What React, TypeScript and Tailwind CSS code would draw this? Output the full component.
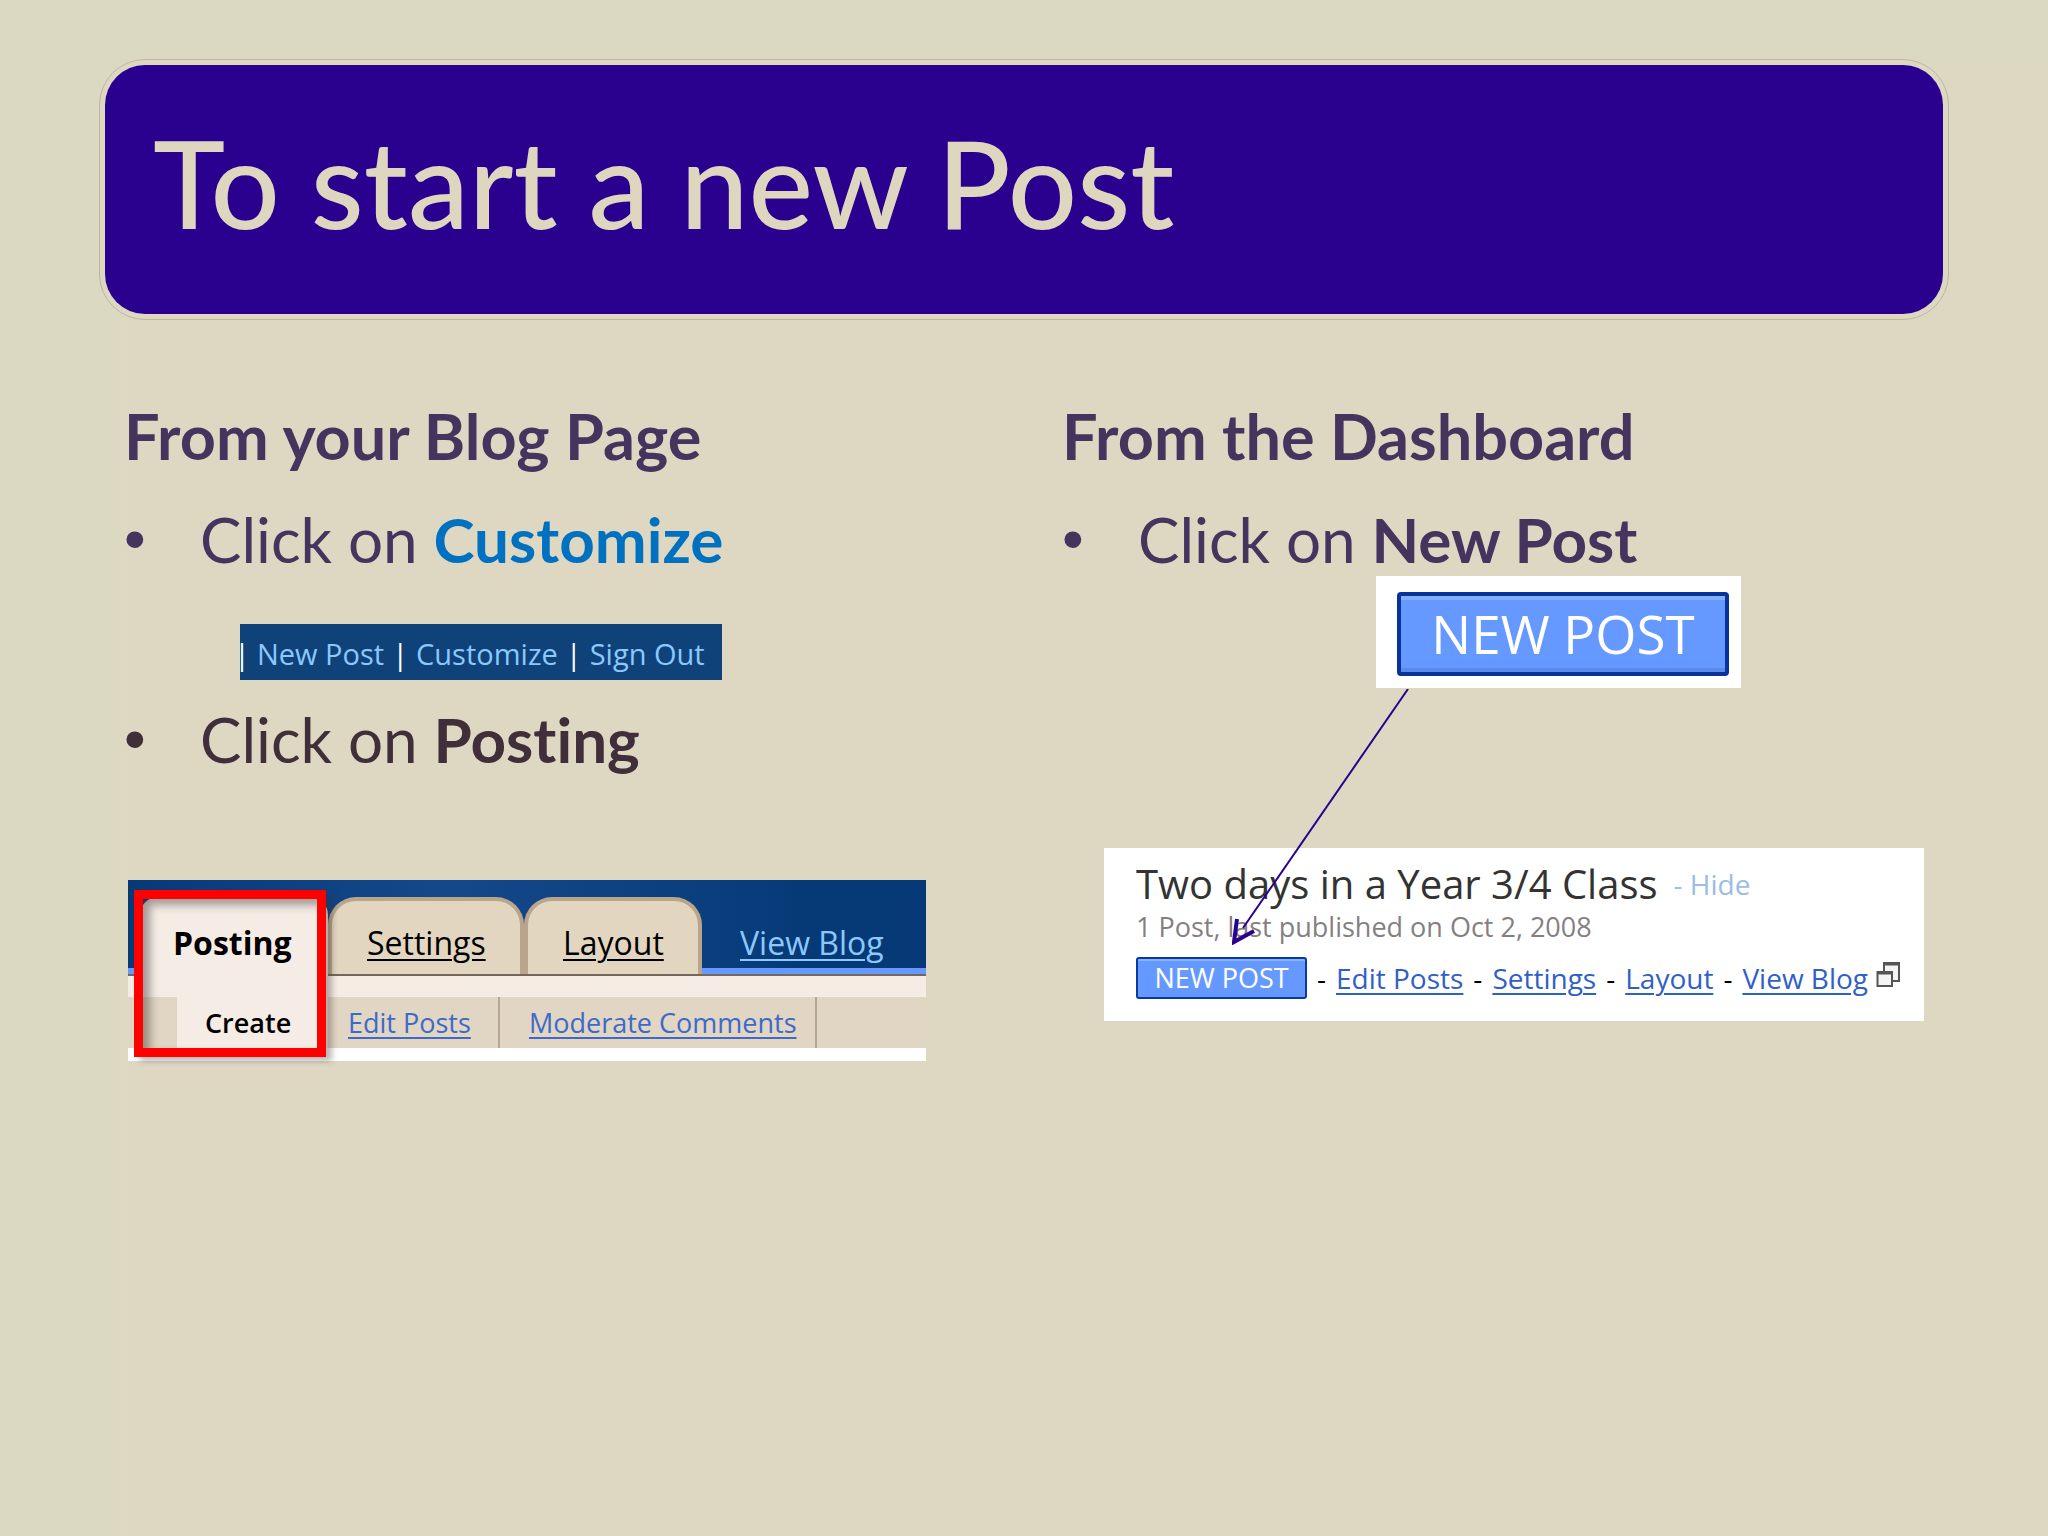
import type { ReactNode } from 'react'

interface BulletProps {
  children: ReactNode
  className?: string
}

const subLinks = [
  { label: 'Edit Posts', className: 'w-[172px] pl-5' },
  { label: 'Moderate Comments', className: 'w-[317px] pl-[29px]' },
]

const dashboardLinks = ['Edit Posts', 'Settings', 'Layout', 'View Blog']

function Bullet({ children, className = '' }: BulletProps) {
  return (
    <p className={`flex text-[62px] leading-[72px] [font-variant-ligatures:none] ${className}`}>
      <span className="w-[76px] shrink-0 font-['Liberation_Sans',sans-serif]">•</span>
      <span>{children}</span>
    </p>
  )
}

function NavBar() {
  return (
    <nav className="ml-[116px] mt-[49px] flex h-14 w-[482px] items-start bg-[#10427a] pt-[14px] text-[29px] leading-8 text-[#8cc8fc]">
      <span className="-ml-[6px] mr-[7px] text-white">|</span>
      <a href="#new-post">New Post</a>
      <span className="mx-2 text-white">|</span>
      <a href="#customize">Customize</a>
      <span className="mx-2 text-white">|</span>
      <a href="#sign-out">Sign Out</a>
    </nav>
  )
}

function PostingTabs() {
  return (
    <div className="relative ml-1 mt-[105px] w-[798px] bg-white pb-[13px]">
      {/* Main tabs */}
      <div className="flex h-24 items-end border-b-2 border-[#75675a] bg-linear-to-r from-[#063a77] via-[#14488b] via-40% to-[#063a77] to-85% text-[32px] leading-10">
        <span className="h-[6px] w-3 bg-[#6699ff]" />
        <a href="#posting" className="-mb-[2px] h-[79px] w-[188px] rounded-t-[18px] bg-[#f5ece5] pl-[33px] pt-[26px] font-bold text-black">
          Posting
        </a>
        <a href="#settings" className="h-[77px] w-[196px] rounded-t-[28px] border-x-4 border-t-4 border-[#b8a58c] bg-[#e2d6c0] pl-[35px] pt-[22px] text-black underline decoration-2 underline-offset-4">
          Settings
        </a>
        <a href="#layout" className="h-[77px] w-[178px] rounded-t-[28px] border-x-4 border-t-4 border-[#b8a58c] bg-[#e2d6c0] pl-[35px] pt-[22px] text-black underline decoration-2 underline-offset-4">
          Layout
        </a>
        <a href="#view-blog" className="h-[77px] grow border-b-[6px] border-[#6699ff] pl-[38px] pt-[26px] text-[#8cc8fc] underline decoration-2 underline-offset-4">
          View Blog
        </a>
      </div>

      {/* Sub tabs */}
      <div className="flex bg-[#e1d5c3] border-t-[21px] border-[#f5ece5] text-[27px] leading-[51px]">
        <a href="#create" className="ml-[49px] w-[151px] bg-[#f5ece5] pl-7 font-semibold text-black">Create</a>
        {subLinks.map((link) => (
          <a
            key={link.label}
            href="#posts"
            className={`border-r-2 border-[#b5a797] text-[#3f69c8] underline decoration-2 underline-offset-4 ${link.className}`}
          >
            {link.label}
          </a>
        ))}
      </div>

      {/* Highlight frame */}
      <span className="pointer-events-none absolute left-[6px] top-[10px] h-[167px] w-48 border-[9px] border-[#ff0000] shadow-[6px_4px_6px_rgba(60,50,50,0.35),inset_7px_6px_8px_rgba(60,50,50,0.45)]" />
    </div>
  )
}

function BlogCard() {
  return (
    <div className="ml-[42px] mt-40 bg-white pb-[22px] pl-8 pt-3">
      <div className="flex h-12 items-start gap-4">
        <h3 className="text-[40px] font-medium leading-[48px] text-[#333333]">Two days in a Year 3/4 Class</h3>
        <a href="#hide" className="text-[28px] leading-[48px] text-[#9dbce6]">- Hide</a>
      </div>
      <p className="mt-[3px] text-[27px] leading-8 text-[#857f82]">1 Post, last published on Oct 2, 2008</p>
      <div className="mt-[14px] flex items-center text-[28px] leading-[42px]">
        <button className="h-[42px] w-[171px] rounded-[3px] border-2 border-[#0a3a9c] bg-[#6699ff] text-[27px] leading-[38px] text-white shadow-[inset_0_2px_0_#86b4ff]">
          NEW POST
        </button>
        {dashboardLinks.map((label) => (
          <span key={label} className="flex text-black">
            <span className="w-[29px] text-center">-</span>
            <a href="#blog" className="font-medium text-[#2f60c8] underline decoration-2 underline-offset-4">{label}</a>
          </span>
        ))}
        <svg className="mb-2 ml-2 h-[27px] w-[25px]" viewBox="0 0 25 27" fill="#f4f4f4" stroke="#555" strokeWidth="2">
          <path d="M8 2H23V20H8Z" />
          <path d="M8 3H23" strokeWidth="3" />
          <path d="M1.5 11H16V25H1.5Z" />
          <path d="M1.5 12H16" strokeWidth="3" />
        </svg>
      </div>
    </div>
  )
}

export default function App() {
  return (
    <main className="min-h-screen bg-[#ded8c3] bg-[linear-gradient(to_bottom,#dbd9c1_56px,transparent_68px),linear-gradient(to_right,#dbd9c1_112px,#ded8c3_132px)] pt-[59px] font-['Open_Sans',sans-serif]">
      <header className="mx-[99px] rounded-[46px] border border-[#bdb5a0] bg-[#ded8c3] p-[5px]">
        <h1 className="rounded-[40px] bg-[#2a008f] pb-[62px] pl-[48px] pt-[47px] font-['Lato',sans-serif] text-[122px] font-medium leading-[140px] text-[#dfd6c0]">
          To start a new Post
        </h1>
      </header>

      <div className="mx-[124px] mt-20 grid grid-cols-2 gap-[76px]">
        <section>
          <div className="font-['Lato',sans-serif] text-[#46335e]">
            <h2 className="mb-[31px] text-[63px] font-bold leading-[72px]">From your Blog Page</h2>
            <Bullet>
              Click on <b className="text-[#0070c0]">Customize</b>
            </Bullet>
          </div>
          <NavBar />
          <Bullet className="mt-[23px] font-['Lato',sans-serif] text-[#402f3b]">
            Click on <b>Posting</b>
          </Bullet>
          <PostingTabs />
        </section>

        <section className="relative">
          <div className="font-['Lato',sans-serif] text-[#46335e]">
            <h2 className="mb-[31px] text-[63px] font-bold leading-[72px]">From the Dashboard</h2>
            <Bullet>
              Click on <b>New Post</b>
            </Bullet>
          </div>
          <div className="ml-[314px] mt-px w-[365px] bg-white pb-3 pl-[21px] pr-3 pt-4">
            <button className="block h-[84px] w-full rounded-[4px] border-4 border-[#0a3399] bg-[#6699ff] text-[53px] leading-[74px] text-white shadow-[inset_0_4px_0_#80b0ff,inset_0_-4px_0_#5a8aec]">
              NEW POST
            </button>
          </div>
          <BlogCard />

          {/* Arrow from the button to the card */}
          <svg className="pointer-events-none absolute left-[170px] top-[289px] h-[256px] w-[178px]" viewBox="0 0 178 256" fill="none" stroke="#2a008f">
            <path d="M176 0L11 239" strokeWidth="2" />
            <path d="M5 230L2 253L22 242" strokeWidth="4" />
          </svg>
        </section>
      </div>
    </main>
  )
}
